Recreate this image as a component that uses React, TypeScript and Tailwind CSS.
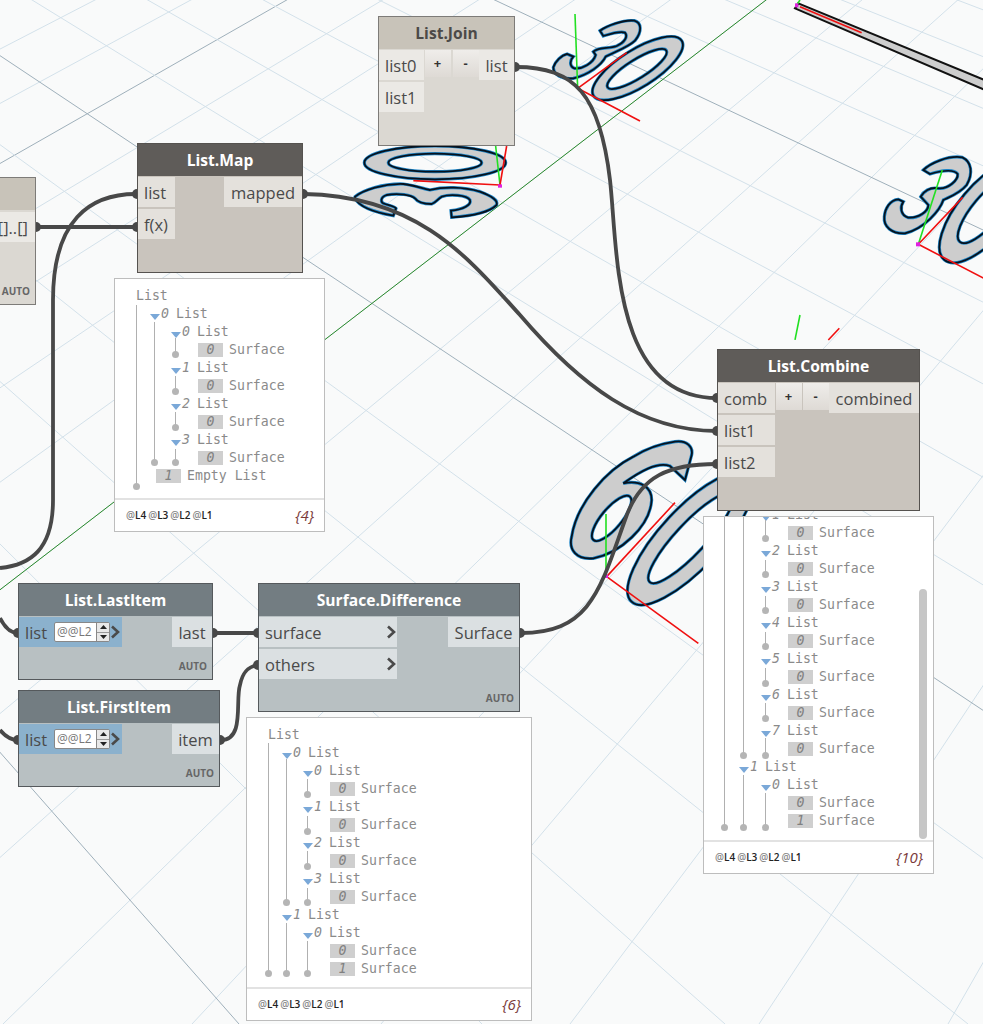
import { ReactNode } from "react";

const UI_FONT = "font-['Open_Sans',sans-serif]";

// vanishing points of the perspective grid, lines are spaced evenly along y=1024
const VA = [2135, -1054];
const VB = [-1480, -930];

function Grid() {
  const a = Array.from({ length: 30 }, (_, i) => i - 15);
  const b = Array.from({ length: 60 }, (_, i) => i - 40);
  return (
    <>
      {a.map((k) => (
        <line
          key={"a" + k}
          x1={VA[0]}
          y1={VA[1]}
          x2={-564 + 189 * k}
          y2={1024}
          stroke={k === -5 ? "#9fb0bb" : "#d3e1ea"}
          strokeWidth={1}
        />
      ))}
      {b.map((k) => (
        <line
          key={"b" + k}
          x1={VB[0]}
          y1={VB[1]}
          x2={1454 + 243 * k}
          y2={1024}
          stroke={k % 5 === 0 ? "#9fb0bb" : "#d3e1ea"}
          strokeWidth={1}
        />
      ))}
      <line x1={VA[0]} y1={VA[1]} x2={-564} y2={1024} stroke="#2a8a2a" strokeWidth={1} />
    </>
  );
}

// solid geometry outline: blue halo under a dark edge
function Solid({ d }: { d: string }) {
  return (
    <>
      <path d={d} fill="#cdcdcd" fillRule="evenodd" stroke="#1f86c8" strokeWidth={3.2} vectorEffect="non-scaling-stroke" />
      <path d={d} fill="none" stroke="#06121e" strokeWidth={1.8} vectorEffect="non-scaling-stroke" />
    </>
  );
}

function ellipsePath(cx: number, cy: number, rx: number, ry: number, rot: number) {
  const r = (rot * Math.PI) / 180;
  const dx = rx * Math.cos(r);
  const dy = rx * Math.sin(r);
  return `M${cx - dx},${cy - dy} A${rx},${ry} ${rot} 1 0 ${cx + dx},${cy + dy} A${rx},${ry} ${rot} 1 0 ${cx - dx},${cy - dy} Z`;
}

function Axis({ d, color }: { d: string; color: string }) {
  return <path d={d} fill="none" stroke={color} strokeWidth={1.6} vectorEffect="non-scaling-stroke" />;
}

function Geometry() {
  return (
    <>
      {/* top centre 30, coordinates in 3x crop space */}
      <g transform="translate(545,10) scale(0.3333)">
        <Solid d={ellipsePath(278, 175, 156, 56, -32) + " " + ellipsePath(276, 177, 104, 28, -32)} />
        <Solid d="M165,62 C185,48 235,28 268,32 C290,38 292,65 270,92 C250,112 210,125 182,140 C170,165 130,195 85,205 C50,208 25,195 25,172 C30,155 50,135 66,132 L85,140 C75,150 72,170 88,175 C110,178 145,160 152,135 L145,125 C165,108 190,118 215,108 C238,98 250,80 240,68 C225,62 195,72 175,78 Z" />
        <Axis d="M90,12 L98,235" color="#22e022" />
        <Axis d="M98,235 L245,128" color="#f01010" />
        <Axis d="M98,235 L285,333" color="#f01010" />
      </g>

      {/* 30 under List.Join */}
      <g transform="translate(350,140) scale(0.3333)">
        <Solid d={ellipsePath(255, 68, 212, 50, 0) + " " + ellipsePath(255, 68, 140, 27, 0)} />
        <Solid d="M15,170 C40,150 100,130 160,132 C190,135 215,145 240,150 C280,140 340,140 390,155 C425,168 445,180 440,195 C420,215 370,228 305,232 L303,212 C340,208 365,195 360,180 C350,165 300,162 275,170 C262,178 258,188 245,192 C225,192 205,190 195,175 C185,165 145,158 110,165 C90,172 90,188 105,192 C120,197 135,200 138,205 L130,227 C90,220 30,205 15,175 Z" />
        <Axis d="M437,18 L450,135" color="#22e022" />
        <Axis d="M470,18 L450,135" color="#f01010" />
        <Axis d="M190,122 L450,135" color="#f01010" />
        <rect x={444} y={133} width={12} height={10} fill="#e020e0" />
      </g>

      {/* beam in the top right corner */}
      <g transform="translate(680,0) scale(0.3333)">
        <path d="M355,10 L950,255 L950,285 L345,25 Z" fill="#cdcdcd" stroke="#111" strokeWidth={2} vectorEffect="non-scaling-stroke" />
        <Axis d="M360,20 L545,98" color="#f01010" />
        <Axis d="M350,15 L360,0" color="#22e022" />
        <rect x={345} y={10} width={10} height={12} fill="#e020e0" />
        <Solid d={ellipsePath(915, 634, 190, 80, -50) + " " + ellipsePath(920, 630, 125, 42, -50)} />
        <Axis d="M345,1020 L360,945" color="#22e022" />
        <Axis d="M445,1020 L478,985" color="#f01010" />
      </g>

      {/* right hand 3 */}
      <g transform="translate(875,150) scale(0.3333)">
        <Solid d="M145,60 C165,40 220,15 262,22 C290,35 295,70 275,105 C255,130 225,140 205,150 C195,180 150,235 90,250 C50,252 25,230 28,200 C30,175 45,150 70,148 L85,155 C75,170 75,195 100,203 C130,205 160,185 160,165 L137,140 C145,125 165,110 190,115 C220,118 250,90 248,72 C235,55 200,62 165,72 Z" />
        <Axis d="M130,283 L202,60" color="#22e022" />
        <Axis d="M130,283 L263,142" color="#f01010" />
        <Axis d="M130,283 L365,405" color="#f01010" />
        <rect x={123} y={277} width={12} height={12} fill="#e020e0" />
      </g>

      {/* 60 beside List.Combine */}
      <g transform="translate(560,340) scale(0.3333)">
        <Solid d={ellipsePath(392, 595, 260, 90, -47) + " " + ellipsePath(392, 595, 180, 45, -47)} />
        <Solid d={"M345,305 C380,300 400,320 395,345 L375,420 L330,378 C290,365 240,395 190,430 C240,420 275,440 275,480 C270,560 180,640 100,655 C50,660 25,630 35,590 C50,490 140,390 220,350 C260,325 310,310 345,305 Z " + ellipsePath(155, 535, 85, 30, -50)} />
        <Axis d="M138,522 L138,710" color="#22e022" />
        <Axis d="M140,710 L345,488" color="#f01010" />
        <Axis d="M140,710 L415,910" color="#f01010" />
        <rect x={134} y={704} width={10} height={10} fill="#e020e0" />
      </g>
    </>
  );
}

const wires = [
  "M136,194 C90,194 53,220 53,300 L53,500 C53,550 30,565 0,568",
  "M36,227 L137,227",
  "M304,194 C420,196 470,260 520,315 C580,385 640,431 717,431",
  "M516,67 C575,67 600,95 610,180 C618,250 612,398 717,398",
  "M521,633 C590,633 600,590 625,520 C640,475 670,464 717,464",
  "M213,633 L258,633",
  "M221,740 C245,740 235,700 240,685 C243,670 250,666 258,665",
  "M0,618 C5,628 10,633 18,633",
  "M0,730 C5,736 10,740 18,740",
];

const dots = [
  [137, 194], [137, 227], [36, 227], [303, 194], [717, 398], [717, 431], [717, 464],
  [515, 67], [213, 633], [258, 633], [258, 665], [220, 740], [520, 633], [18, 633], [18, 740],
];

const TONES = {
  active: { box: "bg-[#c9c4bd] border-[#55524f]", head: "bg-[#5f5c59] text-white", port: "bg-[#e4e1dc]" },
  frozen: { box: "bg-[#dbd8d2] border-[#7d7b78]", head: "bg-[#c8c3b9] text-[#4c4a48]", port: "bg-[#ebe9e5]" },
  slate: { box: "bg-[#b8c0c2] border-[#55595c]", head: "bg-[#737d82] text-white", port: "bg-[#dbe0e2]" },
};

function Node(props: { cls: string; title?: string; tone: keyof typeof TONES; auto?: boolean; children?: ReactNode }) {
  const t = TONES[props.tone];
  return (
    <div className={`absolute border flex flex-col ${props.cls} ${t.box} ${UI_FONT}`}>
      <div className={`h-[32px] shrink-0 pt-px flex items-center justify-center font-bold text-[15.6px] ${t.head}`}>
        {props.title}
      </div>
      <div className="flex flex-1 justify-between pt-px">{props.children}</div>
      {props.auto && (
        <div className="absolute bottom-[7px] right-[5px] font-bold text-[10px] leading-3 text-[#666]">AUTO</div>
      )}
    </div>
  );
}

function Port({ label, tone, cls, right }: { label: string; tone: keyof typeof TONES; cls: string; right?: boolean }) {
  return (
    <div className={`h-[30px] pt-[2px] flex items-center text-[16.5px] leading-none text-[#4a4a4a] ${TONES[tone].port} ${cls} ${right ? "justify-center" : "pl-[6px]"}`}>
      {label}
    </div>
  );
}

function Step({ sign }: { sign: string }) {
  return (
    <div className="w-[26px] h-[27px] flex items-center justify-center font-bold text-[13px] text-[#333] bg-gradient-to-b from-[#efedea] to-[#dedad5]">
      {sign}
    </div>
  );
}

function Chevron() {
  return (
    <svg width="10" height="14" viewBox="0 0 10 14" className="shrink-0">
      <path d="M2 1.5 L8 7 L2 12.5" fill="none" stroke="#4a4a4a" strokeWidth="2.6" />
    </svg>
  );
}

function Lacing({ cls }: { cls: string }) {
  return (
    <div className={`h-[30px] bg-[#8bb1cd] flex items-center text-[16.5px] leading-none text-[#4a4a4a] pl-[6px] ${cls}`}>
      <span className="w-[30px] pt-[2px]">list</span>
      <div className="w-[56px] h-[20px] -ml-px flex bg-white border border-[#888] rounded-[2px] overflow-hidden">
        <span className="flex-1 text-[12px] leading-[18px] pl-[2px] text-[#777]">@@L2</span>
        <div className="w-[13px] flex flex-col border-l border-[#888] bg-[#e8e8e8]">
          <div className="flex-1 flex items-center justify-center border-b border-[#999]">
            <svg width="7" height="4" viewBox="0 0 7 4"><path d="M3.5 0 L7 4 L0 4 Z" fill="#222" /></svg>
          </div>
          <div className="flex-1 flex items-center justify-center">
            <svg width="7" height="4" viewBox="0 0 7 4"><path d="M0 0 L7 0 L3.5 4 Z" fill="#222" /></svg>
          </div>
        </div>
      </div>
      <Chevron />
    </div>
  );
}

type Row = { x: number; n: number; label?: string; box?: boolean; root?: boolean };

function list(x: number, n: number): Row {
  return { x, n };
}
function item(x: number, n: number, label = "Surface"): Row {
  return { x, n, label, box: true };
}
const ROOT: Row = { x: 21, n: 0, root: true };

function TreeRow({ r }: { r: Row }) {
  if (r.root) {
    return (
      <div className="h-[18px] flex items-center" style={{ paddingLeft: r.x }}>
        List
      </div>
    );
  }
  if (r.box) {
    return (
      <div className="h-[18px] flex items-center" style={{ paddingLeft: r.x }}>
        <span className="w-[25px] h-[14px] bg-[#cfcfcf] text-center italic leading-[14px] text-[#808080]">{r.n}</span>
        <span className="ml-[6px]">{r.label}</span>
      </div>
    );
  }
  return (
    <div className="h-[18px] flex items-center" style={{ paddingLeft: r.x }}>
      <svg width="10" height="6" viewBox="0 0 10 6" className="mt-[5px] shrink-0">
        <path d="M0 0 L10 0 L5 6 Z" fill="#7aa8d8" />
      </svg>
      <span className="w-[9px] ml-px italic">{r.n}</span>
      <span className="ml-[6px]">List</span>
    </div>
  );
}

function Preview(props: {
  cls: string;
  rows: Row[];
  guides: number[][];
  count: number;
  top: string;
  scroll?: boolean;
}) {
  return (
    <div className={`absolute bg-white border border-[#bdbdbd] flex flex-col ${props.cls}`}>
      <div className="relative flex-1 overflow-hidden font-['DejaVu_Sans_Mono',monospace] text-[13.2px] text-[#8a8a8a]">
        <div className={props.top}>
          {props.rows.map((r, i) => (
            <TreeRow key={i} r={r} />
          ))}
        </div>
        {props.guides.map(([x, y1, y2], i) => (
          <div key={i}>
            <div className="absolute w-px bg-[#b0b0b0]" style={{ left: x, top: y1, height: y2 - y1 }} />
            <div className="absolute size-[7px] rounded-full bg-[#b5b5b5]" style={{ left: x - 3, top: y2 - 3 }} />
          </div>
        ))}
        {props.scroll && (
          <div className="absolute right-[6px] top-[72px] bottom-[1px] w-[8px] rounded bg-[#c6c6c6]" />
        )}
      </div>
      <div className={`h-[33px] shrink-0 border-t-2 border-[#e2e2e2] flex items-center justify-between pl-[11px] pr-[10px] ${UI_FONT}`}>
        <div className="flex gap-[2px] text-[10px] font-semibold text-[#222]">
          {["L4", "L3", "L2", "L1"].map((l) => (
            <span key={l}>
              <span className="text-[#888]">@</span>
              {l}
            </span>
          ))}
        </div>
        <span className="italic text-[15px] text-[#7a3a3a]">{`{${props.count}}`}</span>
      </div>
    </div>
  );
}

const rows1: Row[] = [
  ROOT,
  list(35, 0), list(56, 0), item(83, 0),
  list(56, 1), item(83, 0),
  list(56, 2), item(83, 0),
  list(56, 3), item(83, 0),
  item(41, 1, "Empty List"),
];
const guides1 = [
  [21, 26, 207],
  [39, 43, 183],
  [60, 59, 75], [60, 97, 112], [60, 133, 148], [60, 170, 183],
];

const rows2: Row[] = [
  ROOT,
  list(35, 0), list(56, 0), item(83, 0),
  list(56, 1), item(83, 0),
  list(56, 2), item(83, 0),
  list(56, 3), item(83, 0),
  list(35, 1), list(56, 0), item(83, 0), item(83, 1),
];
const guides2 = [
  [21, 25, 255],
  [39, 41, 184], [39, 205, 255],
  [60, 61, 76], [60, 98, 113], [60, 133, 148], [60, 170, 184], [60, 223, 255],
];

const rows3: Row[] = [
  list(57, 1), item(84, 0),
  list(57, 2), item(84, 0),
  list(57, 3), item(84, 0),
  list(57, 4), item(84, 0),
  list(57, 5), item(84, 0),
  list(57, 6), item(84, 0),
  list(57, 7), item(84, 0),
  list(35, 1), list(57, 0), item(84, 0), item(84, 1),
];
const guides3 = [
  [20, 0, 310],
  [39, 0, 238], [39, 258, 310],
  [61, 3, 21], [61, 43, 57], [61, 79, 93], [61, 115, 129], [61, 151, 166], [61, 186, 201], [61, 221, 238], [61, 276, 310],
];

export default function App() {
  return (
    <div className="relative w-[983px] h-[1024px] overflow-hidden bg-[#f9fafa]">
      <svg className="absolute inset-0" width="983" height="1024" viewBox="0 0 983 1024">
        <Grid />
        <Geometry />
        <g fill="none" stroke="#484848" strokeWidth={3.8}>
          {wires.map((d) => (
            <path key={d} d={d} />
          ))}
        </g>
        {dots.map(([x, y]) => (
          <circle key={x + "-" + y} cx={x} cy={y} r={5} fill="#484848" />
        ))}
      </svg>

      {/* code block cut off by the left edge */}
      <Node cls="left-[-60px] top-[177px] w-[96px] h-[128px]" tone="frozen" auto>
        <div />
        <div className="h-[30px] w-full mt-px pt-[2px] bg-[#ebe9e5] flex items-center justify-end pr-[7px] text-[16.5px] leading-none text-[#4a4a4a]">[]..[]</div>
      </Node>

      <Node cls="left-[137px] top-[143px] w-[166px] h-[130px]" title="List.Map" tone="active">
        <div className="flex flex-col gap-[2px]">
          <Port label="list" tone="active" cls="w-[37px]" />
          <Port label="f(x)" tone="active" cls="w-[37px]" />
        </div>
        <Port label="mapped" tone="active" cls="w-[78px]" right />
      </Node>

      <Node cls="left-[378px] top-[16px] w-[137px] h-[130px]" title="List.Join" tone="frozen">
        <div className="flex flex-col gap-[2px]">
          <Port label="list0" tone="frozen" cls="w-[45px]" />
          <Port label="list1" tone="frozen" cls="w-[45px]" />
        </div>
        <div className="flex gap-[2px]">
          <Step sign="+" />
          <Step sign="-" />
        </div>
        <Port label="list" tone="frozen" cls="w-[35px]" right />
      </Node>

      <Node cls="left-[717px] top-[349px] w-[203px] h-[162px]" title="List.Combine" tone="active">
        <div className="flex flex-col gap-[2px]">
          <Port label="comb" tone="active" cls="w-[57px]" />
          <Port label="list1" tone="active" cls="w-[57px]" />
          <Port label="list2" tone="active" cls="w-[57px]" />
        </div>
        <div className="flex gap-px">
          <Step sign="+" />
          <Step sign="-" />
        </div>
        <Port label="combined" tone="active" cls="w-[90px]" right />
      </Node>

      <Node cls="left-[18px] top-[583px] w-[195px] h-[97px]" title="List.LastItem" tone="slate" auto>
        <Lacing cls="w-[103px]" />
        <Port label="last" tone="slate" cls="w-[40px]" right />
      </Node>

      <Node cls="left-[18px] top-[690px] w-[202px] h-[97px]" title="List.FirstItem" tone="slate" auto>
        <Lacing cls="w-[103px]" />
        <Port label="item" tone="slate" cls="w-[47px]" right />
      </Node>

      <Node cls="left-[258px] top-[583px] w-[262px] h-[129px]" title="Surface.Difference" tone="slate" auto>
        <div className="flex flex-col gap-[2px]">
          <div className="w-[138px] h-[30px] pl-[6px] pr-px bg-[#dbe0e2] flex items-center justify-between text-[16.5px] leading-none text-[#4a4a4a]">
            <span className="pt-[2px]">surface</span>
            <Chevron />
          </div>
          <div className="w-[138px] h-[30px] pl-[6px] pr-px bg-[#dbe0e2] flex items-center justify-between text-[16.5px] leading-none text-[#4a4a4a]">
            <span className="pt-[2px]">others</span>
            <Chevron />
          </div>
        </div>
        <Port label="Surface" tone="slate" cls="w-[71px]" right />
      </Node>

      <Preview cls="left-[114px] top-[278px] w-[211px] h-[254px]" rows={rows1} guides={guides1} count={4} top="pt-[8px]" />
      <Preview cls="left-[246px] top-[717px] w-[286px] h-[304px]" rows={rows2} guides={guides2} count={6} top="pt-[8px]" />
      <Preview cls="left-[703px] top-[516px] w-[231px] h-[358px]" rows={rows3} guides={guides3} count={10} top="-mt-[11px]" scroll />
    </div>
  );
}
